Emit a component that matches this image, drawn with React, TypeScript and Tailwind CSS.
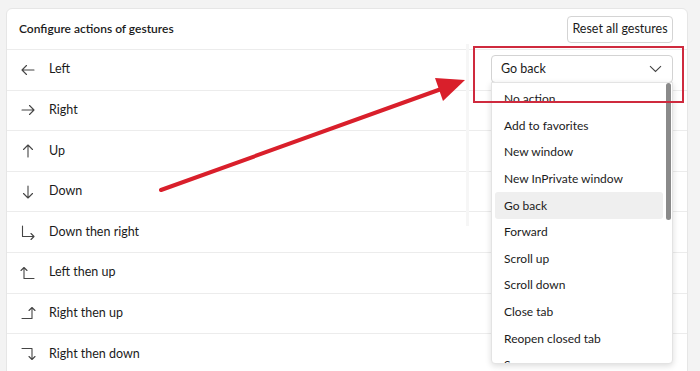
import React from "react";

const font = { fontFamily: 'Lato, "Noto Sans", sans-serif' };

type IconName =
  | "left"
  | "right"
  | "up"
  | "down"
  | "downRight"
  | "leftUp"
  | "rightUp"
  | "rightDown";

function GestureIcon({ name }: { name: IconName }) {
  const paths: Record<IconName, string> = {
    left: "M2 8H14 M6.5 3.5L2 8L6.5 12.5",
    right: "M2 8H14 M9.5 3.5L14 8L9.5 12.5",
    up: "M8 2V14 M3.5 6.5L8 2L12.5 6.5",
    down: "M8 2V14 M3.5 9.5L8 14L12.5 9.5",
    downRight: "M2.5 2V12.5H14 M11 9.5L14 12.5L11 15.5",
    leftUp: "M4 2.5V13.5H14 M1 5.5L4 2.5L7 5.5",
    rightUp: "M2 13.5H12V2.5 M9 5.5L12 2.5L15 5.5",
    rightDown: "M2 2.5H12V13.5 M9 10.5L12 13.5L15 10.5",
  };
  return (
    <svg
      width="16"
      height="16"
      viewBox="0 0 16 16"
      fill="none"
      stroke="#454545"
      strokeWidth="1.1"
      strokeLinecap="round"
      strokeLinejoin="round"
    >
      <path d={paths[name]} />
    </svg>
  );
}

const gestures: { name: IconName; label: string }[] = [
  { name: "left", label: "Left" },
  { name: "right", label: "Right" },
  { name: "up", label: "Up" },
  { name: "down", label: "Down" },
  { name: "downRight", label: "Down then right" },
  { name: "leftUp", label: "Left then up" },
  { name: "rightUp", label: "Right then up" },
  { name: "rightDown", label: "Right then down" },
];

const actions = [
  "No action",
  "Add to favorites",
  "New window",
  "New InPrivate window",
  "Go back",
  "Forward",
  "Scroll up",
  "Scroll down",
  "Close tab",
  "Reopen closed tab",
  "Save page as",
];

export default function App() {
  return (
    <div
      className="relative w-[700px] h-[371px] overflow-hidden bg-[#f3f3f3] text-[#1b1b1b]"
      style={font}
    >
      {/* settings card */}
      <div className="ml-[6px] mt-[8px] w-[682px] h-[400px] bg-white border border-[#e6e6e6] rounded-md">
        <div className="h-[40px] flex items-center justify-between pl-[12px] pr-[14px]">
          <span className="text-[12px] font-semibold">Configure actions of gestures</span>
          <button className="h-[27px] w-[106px] border border-[#d4d4d4] rounded-[4px] text-[12.5px] bg-white">
            Reset all gestures
          </button>
        </div>
        {gestures.map((g) => (
          <div
            key={g.label}
            className="h-[40.6px] border-t border-[#ececec] flex items-center pl-[13px]"
          >
            <GestureIcon name={g.name} />
            <span className="ml-[13px] text-[12.5px]">{g.label}</span>
          </div>
        ))}
      </div>

      {/* faint shadow */}
      <div className="absolute left-[466px] top-[44px] w-[3px] h-[182px] bg-[#f6f6f6]" />

      {/* select */}
      <div className="absolute left-[491px] top-[55px] w-[182px] h-[28px] bg-white border border-[#d3d3d3] rounded-[4px] flex items-center justify-between pl-[9px] pr-[10px]">
        <span className="text-[12.5px]">Go back</span>
        <svg width="13" height="8" viewBox="0 0 13 8" fill="none" stroke="#444" strokeWidth="1.1">
          <path d="M1 1.2L6.5 6.5L12 1.2" />
        </svg>
      </div>

      {/* dropdown list */}
      <div className="absolute left-[491px] top-[82px] w-[182px] h-[282px] bg-white border border-[#e3e3e3] rounded-b-[4px] shadow-[0_2px_6px_rgba(0,0,0,0.14)] overflow-hidden">
        <div className="pt-[3px]">
          {actions.map((a) => (
            <div
              key={a}
              className={
                "h-[26.6px] ml-[3px] mr-[9px] pl-[9px] flex items-center rounded-[3px] text-[12px] whitespace-nowrap " +
                (a === "Go back" ? "bg-[#efefef]" : "")
              }
            >
              {a}
            </div>
          ))}
        </div>
        <div className="absolute right-[1px] top-[0px] w-[5px] h-[137px] rounded-full bg-[#8a8a8a]" />
      </div>

      {/* red highlight box */}
      <div className="absolute left-[473px] top-[46px] w-[211px] h-[57px] border-2 border-[#cf2a3e]" />

      {/* red arrow */}
      <svg className="absolute left-0 top-0" width="700" height="371" viewBox="0 0 700 371">
        <line x1="161" y1="190" x2="444" y2="88" stroke="#d91f2b" strokeWidth="4" strokeLinecap="round" />
        <polygon points="465,80 435,78 443,101" fill="#d91f2b" />
      </svg>
    </div>
  );
}
